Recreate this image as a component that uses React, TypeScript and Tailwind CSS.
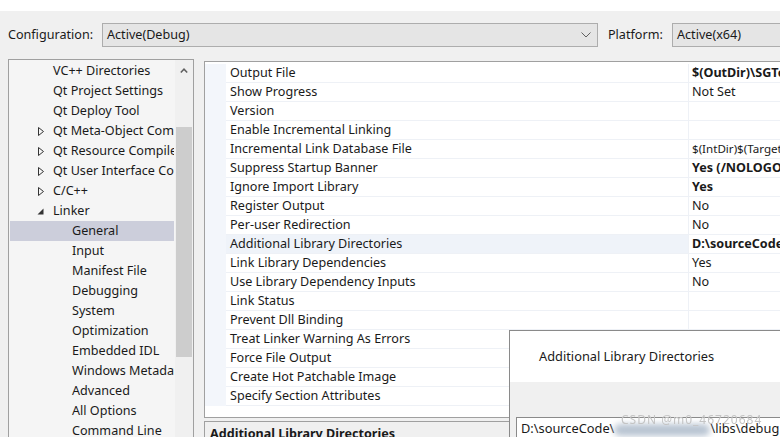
import React from "react";

const tree: { label: string; level: 1 | 2; arrow?: "right" | "down"; selected?: boolean }[] = [
  { label: "VC++ Directories", level: 1 },
  { label: "Qt Project Settings", level: 1 },
  { label: "Qt Deploy Tool", level: 1 },
  { label: "Qt Meta-Object Compiler", level: 1, arrow: "right" },
  { label: "Qt Resource Compiler", level: 1, arrow: "right" },
  { label: "Qt User Interface Compiler", level: 1, arrow: "right" },
  { label: "C/C++", level: 1, arrow: "right" },
  { label: "Linker", level: 1, arrow: "down" },
  { label: "General", level: 2, selected: true },
  { label: "Input", level: 2 },
  { label: "Manifest File", level: 2 },
  { label: "Debugging", level: 2 },
  { label: "System", level: 2 },
  { label: "Optimization", level: 2 },
  { label: "Embedded IDL", level: 2 },
  { label: "Windows Metadata", level: 2 },
  { label: "Advanced", level: 2 },
  { label: "All Options", level: 2 },
  { label: "Command Line", level: 2 },
];

const rows: { name: string; value?: string; bold?: boolean; small?: boolean; hl?: boolean }[] = [
  { name: "Output File", value: "$(OutDir)\\SGTest.exe", bold: true },
  { name: "Show Progress", value: "Not Set" },
  { name: "Version" },
  { name: "Enable Incremental Linking" },
  { name: "Incremental Link Database File", value: "$(IntDir)$(TargetName).ilk", small: true },
  { name: "Suppress Startup Banner", value: "Yes (/NOLOGO)", bold: true },
  { name: "Ignore Import Library", value: "Yes", bold: true },
  { name: "Register Output", value: "No" },
  { name: "Per-user Redirection", value: "No" },
  { name: "Additional Library Directories", value: "D:\\sourceCode\\", bold: true, hl: true },
  { name: "Link Library Dependencies", value: "Yes" },
  { name: "Use Library Dependency Inputs", value: "No" },
  { name: "Link Status" },
  { name: "Prevent Dll Binding" },
  { name: "Treat Linker Warning As Errors" },
  { name: "Force File Output" },
  { name: "Create Hot Patchable Image" },
  { name: "Specify Section Attributes" },
];

function Chevron() {
  return (
    <svg width="10" height="6" viewBox="0 0 10 6" className="shrink-0">
      <polyline points="0.5,0.5 5,5 9.5,0.5" fill="none" stroke="#606060" strokeWidth="1" />
    </svg>
  );
}

export default function App() {
  return (
    <div className="w-[780px] h-[437px] overflow-hidden bg-[#f0f0f0] relative font-['Noto_Sans',sans-serif] text-[12.3px] text-[#1a1a1a] leading-none">
      <div className="h-[11px] bg-white" />
      {/* config row */}
      <div className="flex items-center h-[24px] mt-[12px] whitespace-nowrap">
        <span className="ml-[8px] w-[94px] shrink-0 text-[12.6px]">Configuration:</span>
        <div className="w-[496px] shrink-0 h-[24px] bg-[#e5e5e5] border border-[#adadad] flex items-center pl-[4px] pr-[6px] text-[12.6px]">
          <span className="flex-1">Active(Debug)</span>
          <Chevron />
        </div>
        <span className="ml-[10px] w-[64px] shrink-0 text-[12.6px]">Platform:</span>
        <div className="w-[200px] shrink-0 h-[24px] bg-[#e5e5e5] border border-[#adadad] flex items-center pl-[4px] text-[12.6px]">
          <span>Active(x64)</span>
        </div>
      </div>
      {/* main */}
      <div className="flex mt-[12px]">
        {/* tree */}
        <div className="ml-[8px] w-[186px] shrink-0 h-[400px] border border-[#a0a0a0] bg-[#f5f5f5] flex">
          <div className="w-[166px] overflow-hidden pt-[1px]">
            {tree.map((t) => (
              <div
                key={t.label}
                className={`h-[20px] flex items-center whitespace-nowrap text-[12.6px] ${t.selected ? "bg-[#cccedb] ml-[1px]" : ""}`}
              >
                <div className={`${t.level === 1 ? "w-[44px]" : t.selected ? "w-[62px]" : "w-[63px]"} shrink-0 flex justify-end pr-[9px]`}>
                  {t.arrow === "right" && (
                    <svg width="6" height="9" viewBox="0 0 6 9">
                      <polygon points="0.5,0.5 5.5,4.5 0.5,8.5" fill="none" stroke="#333" strokeWidth="1" />
                    </svg>
                  )}
                  {t.arrow === "down" && (
                    <svg width="7" height="7" viewBox="0 0 7 7">
                      <polygon points="6.5,0.5 6.5,6.5 0.5,6.5" fill="#333" />
                    </svg>
                  )}
                </div>
                <span>{t.label}</span>
              </div>
            ))}
          </div>
          <div className="w-[18px] ml-[1px] bg-[#f0f0f0] flex flex-col items-center">
            <div className="h-[20px] flex items-center justify-center">
              <svg width="8" height="5" viewBox="0 0 8 5">
                <polyline points="0.8,4.5 4,1.2 7.2,4.5" fill="none" stroke="#606060" strokeWidth="1.5" />
              </svg>
            </div>
            <div className="w-[16px] h-[230px] mt-[47px] bg-[#cdcdcd]" />
          </div>
        </div>
        {/* right */}
        <div className="ml-[10px] mt-[2px] flex-1 min-w-0">
          <div className="h-[357px] border border-[#a0a0a0] bg-white w-[600px] pt-[2px]">
            {rows.map((r) => (
              <div key={r.name} className="flex h-[19px]">
                <div className="w-[21px] bg-[#f3f6fb] shrink-0" />
                <div className={`w-[462px] shrink-0 border-b border-[#eef1f6] flex items-center pl-[4px] whitespace-nowrap text-[12.6px] ${r.hl ? "bg-[#eff3f9]" : ""}`}>
                  {r.name}
                </div>
                <div className={`flex-1 border-b border-l border-[#eef1f6] flex items-center pl-[3px] whitespace-nowrap overflow-hidden ${r.bold ? "font-bold text-[12.6px]" : r.small ? "text-[11.6px]" : "text-[12.6px]"}`}>
                  {r.value ?? ""}
                </div>
              </div>
            ))}
          </div>
          <div className="mt-[3px] h-[30px] border-t border-l border-[#a0a0a0] bg-[#f0f0f0] pl-[5px] pt-[6px] font-bold text-[12.6px] whitespace-nowrap">
            Additional Library Directories
          </div>
        </div>
      </div>
      {/* dialog overlay */}
      <div className="absolute left-[509px] top-[330px] w-[300px] h-[130px] border border-[#8a8a8a] bg-[#f0f0f0]">
        <div className="h-[51px] bg-white flex items-center pl-[29px] text-[12.8px]">
          Additional Library Directories
        </div>
        <div className="mt-[35px] ml-[6px] h-[30px] border border-[#8a8a8a] bg-white flex items-start pt-[4px] pl-[4px] text-[12.8px] whitespace-nowrap relative">
          <span>D:\sourceCode\</span>
          <span className="inline-block w-[96px] h-[12px] mt-[2px] bg-[#b8c4d2] blur-[3px] rounded-full" />
          <span>\libs\debug</span>
          <span className="absolute left-[104px] top-[-4px] text-[12px] text-[#c4c4c4] blur-[0.6px] tracking-[1px]">CSDN @m0_46720684</span>
        </div>
      </div>
    </div>
  );
}
